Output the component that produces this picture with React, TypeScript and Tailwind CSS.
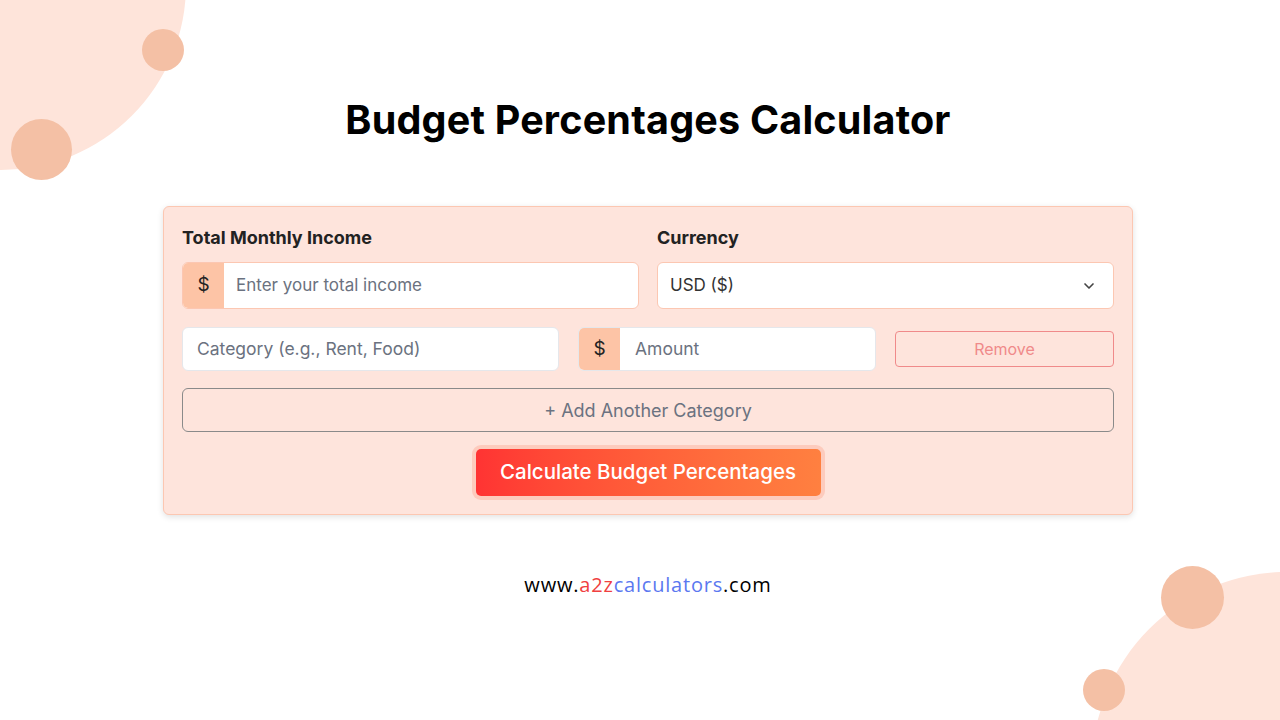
import React from "react";

export default function App() {
  return (
    <div className="relative w-[1280px] h-[720px] overflow-hidden bg-white" style={{ fontFamily: "Inter, 'Liberation Sans', sans-serif" }}>
      {/* decorative circles */}
      <div className="absolute left-[-188px] top-[-200px] w-[374px] h-[370px] rounded-full bg-[#fee4da]" />
      <div className="absolute left-[142px] top-[29px] w-[42px] h-[42px] rounded-full bg-[#f4c0a5]" />
      <div className="absolute left-[11px] top-[119px] w-[61px] h-[61px] rounded-full bg-[#f4c0a5]" />
      <div className="absolute left-[1092px] top-[572px] w-[390px] h-[390px] rounded-full bg-[#fee4da]" />
      <div className="absolute left-[1161px] top-[566px] w-[63px] h-[63px] rounded-full bg-[#f4c0a5]" />
      <div className="absolute left-[1083px] top-[669px] w-[42px] h-[42px] rounded-full bg-[#f4c0a5]" />

      <div className="relative flex flex-col items-center">
        <h1 className="mt-[95px] ml-[16px] text-[39.5px] leading-[50px] font-bold text-black tracking-[0.2px]" style={{ fontFamily: "Inter, sans-serif" }}>
          Budget Percentages Calculator
        </h1>

        <div className="mt-[61px] w-[970px] ml-[16px] bg-[#fee4dc] border border-[#fcc7b2] rounded-[6px] shadow-[0_2px_6px_rgba(0,0,0,0.12)] px-[18px] pt-[19px] pb-[14px]">
          <div className="grid grid-cols-2 gap-[18px]">
            <div>
              <div className="text-[18px] leading-[24px] font-bold text-[#222]">Total Monthly Income</div>
              <div className="mt-[12px] flex h-[47px] rounded-[6px] border border-[#fcc7b2] overflow-hidden bg-white">
                <div className="w-[41px] bg-[#fdc4a6] flex items-center justify-center text-[19px] text-[#222]">$</div>
                <div className="flex-1 flex items-center px-[12px] text-[17px] text-[#6b7280]">Enter your total income</div>
              </div>
            </div>
            <div>
              <div className="text-[18px] leading-[24px] font-bold text-[#222]">Currency</div>
              <div className="mt-[12px] flex h-[47px] rounded-[6px] border border-[#fcc7b2] bg-white items-center px-[12px] justify-between">
                <span className="text-[17px] text-[#333]">USD ($)</span>
                <svg width="16" height="16" viewBox="0 0 24 24" fill="none" stroke="#444" strokeWidth="2.5" strokeLinecap="round" strokeLinejoin="round" className="mr-[4px]">
                  <path d="M6 9l6 6 6-6" />
                </svg>
              </div>
            </div>
          </div>

          <div className="mt-[18px] flex items-center gap-[19px]">
            <div className="w-[377px] h-[44px] rounded-[6px] border border-[#e5e7eb] bg-white flex items-center px-[14px] text-[17.5px] text-[#6b7280]">
              Category (e.g., Rent, Food)
            </div>
            <div className="w-[298px] flex h-[44px] rounded-[6px] border border-[#e5e7eb] overflow-hidden bg-white">
              <div className="w-[41px] bg-[#fdc4a6] flex items-center justify-center text-[19px] text-[#222]">$</div>
              <div className="flex-1 flex items-center px-[15px] text-[17.5px] text-[#6b7280]">Amount</div>
            </div>
            <div className="flex-1 h-[36px] rounded-[4px] border-[1.5px] border-[#f08a8a] flex items-center justify-center text-[16px] text-[#f08a8a]">
              Remove
            </div>
          </div>

          <div className="mt-[17px] h-[44px] rounded-[6px] border-[1.5px] border-[#8a8a8a] flex items-center justify-center text-[18px] text-[#6b7280]">
            + Add Another Category
          </div>

          <div className="mt-[13px] flex justify-center">
            <div className="p-[4px] rounded-[9px] bg-[#fdcbbd]">
              <div className="w-[345px] h-[47px] rounded-[5px] bg-gradient-to-r from-[#ff3333] to-[#ff8040] flex items-center justify-center text-[20.5px] text-white font-medium">
                Calculate Budget Percentages
              </div>
            </div>
          </div>
        </div>

        <div className="mt-[56px] ml-[16px] text-[20px] leading-[28px] text-black tracking-[0.8px]" style={{ fontFamily: "'Open Sans', sans-serif" }}>
          www.<span className="text-[#f04040]">a2z</span><span className="text-[#5b78f0]">calculators</span>.com
        </div>
      </div>
    </div>
  );
}
